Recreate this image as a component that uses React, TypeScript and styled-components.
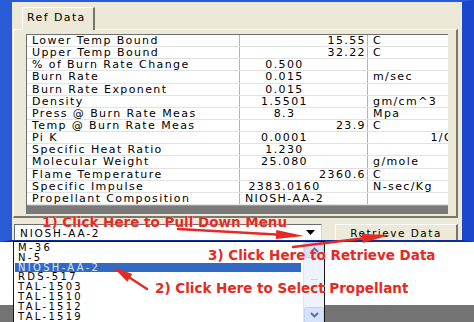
import React from 'react';
import styled, { createGlobalStyle } from 'styled-components';

const GlobalStyle = createGlobalStyle`
  html, body {
    margin: 0;
    padding: 0;
  }
  body {
    width: 474px;
    height: 322px;
    overflow: hidden;
    background: #ffffff;
    font-family: "DejaVu Sans", Verdana, sans-serif;
  }
`;

type TAlign = 'right' | 'center';
type TRefRow = { label: string; value: string; align: TAlign; unit: string; unitRight?: boolean };

const ROWS: TRefRow[] = [
  { label: 'Lower Temp Bound', value: '15.55', align: 'right', unit: 'C' },
  { label: 'Upper Temp Bound', value: '32.22', align: 'right', unit: 'C' },
  { label: '% of Burn Rate Change', value: '0.500', align: 'center', unit: '' },
  { label: 'Burn Rate', value: '0.015', align: 'center', unit: 'm/sec' },
  { label: 'Burn Rate Exponent', value: '0.015', align: 'center', unit: '' },
  { label: 'Density', value: '1.5501', align: 'center', unit: 'gm/cm^3' },
  { label: 'Press @ Burn Rate Meas', value: '8.3', align: 'center', unit: 'Mpa' },
  { label: 'Temp @ Burn Rate Meas', value: '23.9', align: 'right', unit: 'C' },
  { label: 'Pi K', value: '0.0001', align: 'center', unit: '1/C', unitRight: true },
  { label: 'Specific Heat Ratio', value: '1.230', align: 'center', unit: '' },
  { label: 'Molecular Weight', value: '25.080', align: 'center', unit: 'g/mole' },
  { label: 'Flame Temperature', value: '2360.6', align: 'right', unit: 'C' },
  { label: 'Specific Impulse', value: '2383.0160', align: 'center', unit: 'N-sec/Kg' },
  { label: 'Propellant Composition', value: 'NIOSH-AA-2', align: 'center', unit: '' },
];

const OPTIONS = ['M-36', 'N-5', 'NIOSH-AA-2', 'RDS-517', 'TAL-1503', 'TAL-1510', 'TAL-1512', 'TAL-1519'];
const SELECTED = 'NIOSH-AA-2';

const RED = '#e42a22';

type TArrowProps = { x1: number; y1: number; x2: number; y2: number; head?: number };

const Arrow: React.FC<TArrowProps> = ({ x1, y1, x2, y2, head = 22 }) => {
  const angle = Math.atan2(y2 - y1, x2 - x1);
  const bx = x2 - head * Math.cos(angle);
  const by = y2 - head * Math.sin(angle);
  const half = 4.5;
  const px = -Math.sin(angle) * half;
  const py = Math.cos(angle) * half;
  return (
    <g>
      <line x1={x1} y1={y1} x2={bx} y2={by} stroke={RED} strokeWidth={2.4} strokeLinecap="round" />
      <polygon points={`${x2},${y2} ${bx + px},${by + py} ${bx - px},${by - py}`} fill={RED} />
    </g>
  );
};

const App: React.FC = () => {
  return (
    <>
      <GlobalStyle />
      <S.Screen>
        <S.Window>
          <S.TabStrip>
            <S.Tab>Ref Data</S.Tab>
          </S.TabStrip>
          <S.TabPanel>
            <S.Grid>
              {ROWS.map((row) => (
                <S.Row key={row.label}>
                  <S.LabelCell>{row.label}</S.LabelCell>
                  <S.ValueCell $align={row.align}>{row.value}</S.ValueCell>
                  <S.UnitCell $right={!!row.unitRight}>
                    <span>{row.unit}</span>
                  </S.UnitCell>
                </S.Row>
              ))}
              <S.GridFooter />
            </S.Grid>
          </S.TabPanel>
          <S.ControlRow>
            <S.Combo>
              <S.ComboText>NIOSH-AA-2</S.ComboText>
              <svg width="9" height="5" viewBox="0 0 9 5">
                <polygon points="0,0 9,0 4.5,5" fill="#000" />
              </svg>
            </S.Combo>
            <S.Button>Retrieve Data</S.Button>
          </S.ControlRow>
        </S.Window>

        <S.Desktop>
          <S.DesktopWhite />
          <S.DesktopGray />
        </S.Desktop>

        <S.DropList>
          <S.Options>
            {OPTIONS.map((name) => (
              <S.Option key={name} $selected={name === SELECTED}>
                {name}
              </S.Option>
            ))}
          </S.Options>
          <S.ScrollBar>
            <S.ScrollButton>
              <svg width="9" height="6" viewBox="0 0 9 6">
                <polyline points="1,5 4.5,1.5 8,5" fill="none" stroke="#4d6cb0" strokeWidth="1.8" />
              </svg>
            </S.ScrollButton>
            <S.ScrollTrack>
              <S.Grip />
            </S.ScrollTrack>
            <S.ScrollButton>
              <svg width="9" height="6" viewBox="0 0 9 6">
                <polyline points="1,1 4.5,4.5 8,1" fill="none" stroke="#4d6cb0" strokeWidth="1.8" />
              </svg>
            </S.ScrollButton>
          </S.ScrollBar>
        </S.DropList>

        <S.Arrows width="474" height="322" viewBox="0 0 474 322">
          <Arrow x1={178} y1={229} x2={304} y2={236} head={28} />
          <Arrow x1={293} y1={247} x2={390} y2={235} head={28} />
          <Arrow x1={147} y1={289} x2={113} y2={267} head={20} />
        </S.Arrows>

        <S.Note $x={42} $y={215}>1) Click Here to Pull Down Menu</S.Note>
        <S.Note $x={208} $y={248}>3) Click Here to Retrieve Data</S.Note>
        <S.Note $x={155} $y={281}>2) Click Here to Select Propellant</S.Note>
      </S.Screen>
    </>
  );
};

export default App;

const S = {
  Screen: styled.div`
    position: relative;
    width: 474px;
    height: 322px;
    overflow: hidden;
  `,
  Window: styled.div`
    box-sizing: border-box;
    height: 242px;
    display: flex;
    flex-direction: column;
    background: #ece9d8;
    border-top: 2px solid #2a5bd7;
    border-left: 12px solid #2a5bd7;
    border-right: 12px solid #1b47cf;
    border-bottom: 2px solid #0e2c9a;
  `,
  TabStrip: styled.div`
    display: flex;
    padding: 5px 0 0 10px;
    position: relative;
    z-index: 1;
  `,
  Tab: styled.div`
    box-sizing: border-box;
    width: 73px;
    height: 23px;
    margin-bottom: -1px;
    padding: 3px 0 0 4px;
    background: #ece9d8;
    border-top: 1px solid #ffffff;
    border-left: 1px solid #ffffff;
    border-right: 2px solid #76736a;
    font-size: 11px;
    letter-spacing: 1.4px;
    line-height: 13px;
    color: #000;
  `,
  TabPanel: styled.div`
    box-sizing: border-box;
    height: 189px;
    margin: 0 4px 0 1px;
    padding: 4px 9px 0 12px;
    border-top: 1px solid #ffffff;
    border-left: 1px solid #ffffff;
    border-right: 2px solid #7a776d;
    border-bottom: 2px solid #7a776d;
  `,
  Grid: styled.div`
    width: 421px;
    background: #ffffff;
    border-top: 1px solid #6f6f6f;
    border-left: 1px solid #6f6f6f;
  `,
  Row: styled.div`
    box-sizing: border-box;
    display: grid;
    grid-template-columns: 213px 128px 1fr;
    height: 12.15px;
    border-bottom: 1px solid #e2e2e2;
    font-size: 11px;
    letter-spacing: 1.4px;
    line-height: 11px;
    color: #000;
  `,
  LabelCell: styled.div`
    padding-left: 5px;
    white-space: nowrap;
    border-right: 1px solid #b4b4b4;
  `,
  ValueCell: styled.div<{ $align: TAlign }>`
    white-space: nowrap;
    border-right: 1px solid #b4b4b4;
    text-align: ${({ $align }) => $align};
    padding-right: ${({ $align }) => ($align === 'center' ? '38px' : '1px')};
  `,
  UnitCell: styled.div<{ $right: boolean }>`
    display: flex;
    justify-content: ${({ $right }) => ($right ? 'flex-end' : 'flex-start')};
    padding-left: 5px;
    white-space: nowrap;
    overflow: hidden;
    span {
      margin-right: ${({ $right }) => ($right ? '-5px' : '0')};
    }
  `,
  GridFooter: styled.div`
    height: 8px;
    background: #7a7a7a;
    border-top: 1px solid #9a9a9a;
  `,
  ControlRow: styled.div`
    display: flex;
    gap: 13px;
    margin-top: 6px;
    padding-left: 2px;
    height: 16px;
  `,
  Combo: styled.div`
    box-sizing: border-box;
    width: 308px;
    height: 16px;
    display: flex;
    align-items: center;
    justify-content: space-between;
    padding: 0 6px 0 5px;
    background: #ffffff;
    border-top: 1px solid #6d6d6d;
    border-left: 1px solid #6d6d6d;
    border-right: 1px solid #d8d5c8;
  `,
  ComboText: styled.span`
    font-size: 10.5px;
    letter-spacing: 1.8px;
    line-height: 12px;
    color: #000;
  `,
  Button: styled.div`
    box-sizing: border-box;
    width: 123px;
    height: 16px;
    display: flex;
    align-items: center;
    justify-content: center;
    background: #ece9d8;
    border-top: 1px solid #ffffff;
    border-left: 1px solid #ffffff;
    border-right: 2px solid #76736a;
    font-size: 10.5px;
    letter-spacing: 1.5px;
    color: #000;
  `,
  Desktop: styled.div`
    display: flex;
    flex-direction: column;
    height: 80px;
  `,
  DesktopWhite: styled.div`
    height: 63px;
    background: #ffffff;
  `,
  DesktopGray: styled.div`
    flex: 1;
    background: #737373;
  `,
  DropList: styled.div`
    position: absolute;
    left: 13px;
    top: 241px;
    width: 312px;
    height: 82px;
    box-sizing: border-box;
    display: flex;
    background: #ffffff;
    border: 1px solid #151515;
    border-bottom: none;
  `,
  Options: styled.div`
    flex: 1;
    padding: 1px 2px 0 1px;
  `,
  Option: styled.div<{ $selected: boolean }>`
    height: 9.8px;
    padding-left: 3px;
    font-size: 10px;
    letter-spacing: 2.3px;
    line-height: 10px;
    white-space: nowrap;
    background: ${({ $selected }) => ($selected ? '#316ac5' : 'transparent')};
    color: ${({ $selected }) => ($selected ? '#dbe6ff' : '#000')};
  `,
  ScrollBar: styled.div`
    width: 20px;
    display: flex;
    flex-direction: column;
    background: #eef2fa;
    border-left: 1px solid #e0e6f2;
  `,
  ScrollButton: styled.div`
    height: 14px;
    display: flex;
    align-items: center;
    justify-content: center;
    background: #d6e2fa;
    border: 1px solid #c3d2f2;
    border-radius: 2px;
  `,
  ScrollTrack: styled.div`
    flex: 1;
    display: flex;
    align-items: center;
    justify-content: center;
  `,
  Grip: styled.div`
    width: 7px;
    height: 5px;
    border-top: 1px solid #c8d3ea;
    border-bottom: 1px solid #c8d3ea;
  `,
  Arrows: styled.svg`
    position: absolute;
    left: 0;
    top: 0;
    pointer-events: none;
  `,
  Note: styled.div<{ $x: number; $y: number }>`
    position: absolute;
    left: ${({ $x }) => $x}px;
    top: ${({ $y }) => $y}px;
    font-family: "DejaVu Sans", Verdana, sans-serif;
    font-weight: 700;
    font-size: 13.5px;
    line-height: 14px;
    white-space: nowrap;
    color: ${RED};
    text-shadow: 0 0 1px rgba(255, 255, 255, 0.9);
    pointer-events: none;
  `,
};
